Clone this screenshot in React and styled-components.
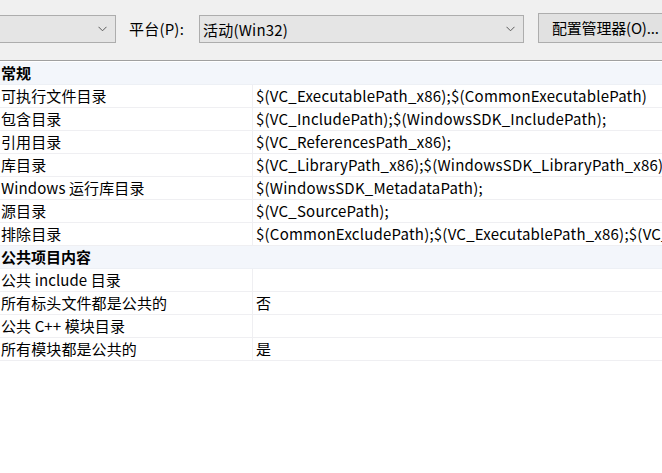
import React from "react";
import styled, { createGlobalStyle } from "styled-components";

const Global = createGlobalStyle`
  html, body { margin: 0; padding: 0; background: #ffffff; }
  body {
    width: 662px; height: 473px; overflow: hidden;
    font-family: "Segoe UI", "Noto Sans", "Noto Sans CJK SC", sans-serif;
    font-size: 15px; color: #000;
  }
`;

const Page = styled.div`
  width: 662px;
  height: 473px;
  overflow: hidden;
  background: #fff;
  display: flex;
  flex-direction: column;
`;

const Toolbar = styled.div`
  height: 61px;
  box-sizing: border-box;
  flex: none;
  background: #f0f0f0;
  border-bottom: 1px solid #a0a0a0;
  display: flex;
  align-items: flex-start;
  padding-top: 13px;
  overflow: hidden;
  white-space: nowrap;
`;

const Combo = styled.div`
  box-sizing: border-box;
  flex: none;
  height: 28px;
  margin-top: 2px;
  width: ${(p) => p.$width}px;
  margin-left: ${(p) => p.$ml || 0}px;
  background: #e5e5e5;
  border: 1px solid #adadad;
  display: flex;
  align-items: center;
  justify-content: space-between;
  padding: 0 8px 0 3px;
  font-family: "Noto Sans CJK SC", "Noto Sans", sans-serif;
  font-size: 15px;
  letter-spacing: 0.2px;
  color: #000;
`;

const Label = styled.span`
  flex: none;
  margin: 2px 15px 0 13px;
  height: 28px;
  line-height: 28px;
  font-family: "Noto Sans CJK SC", "Noto Sans", sans-serif;
  font-size: 15px;
  letter-spacing: 0.2px;
  color: #000;
`;

const Button = styled.div`
  flex: none;
  box-sizing: border-box;
  margin-left: 14px;
  width: 150px;
  height: 30px;
  background: #e1e1e1;
  border: 1px solid #adadad;
  padding-left: 13px;
  line-height: 28px;
  font-family: "Noto Sans CJK SC", "Noto Sans", sans-serif;
  font-size: 15px;
  letter-spacing: -0.2px;
  color: #000;
`;

const Grid = styled.div`
  padding-top: 1px;
  font-family: "Noto Sans CJK SC", "Noto Sans", sans-serif;
  font-size: 15px;
`;

const Header = styled.div`
  height: 23px;
  box-sizing: border-box;
  background: #f3f6fb;
  border-bottom: 1px solid #edf0f5;
  padding-left: 1px;
  font-weight: 700;
  line-height: 22px;
  color: #000;
  white-space: nowrap;
`;

const Row = styled.div`
  display: grid;
  grid-template-columns: 253px 1fr;
  height: 23px;
  box-sizing: border-box;
  border-bottom: 1px solid #efeff2;
  background: #fff;
  white-space: nowrap;
  overflow: hidden;
`;

const NameCell = styled.div`
  border-right: 1px solid #efeff2;
  padding-left: 1px;
  line-height: 22px;
  overflow: hidden;
  letter-spacing: 0.1px;
  color: #000;
`;

const ValueCell = styled.div`
  padding-left: 3px;
  line-height: 22px;
  overflow: hidden;
  letter-spacing: 0.22px;
  color: #000;
`;

const Chevron = () => (
  <svg width="9" height="6" viewBox="0 0 9 6" style={{ flex: "none" }}>
    <path d="M0.5 0.8 L4.5 4.8 L8.5 0.8" fill="none" stroke="#5a5a5a" strokeWidth="1" />
  </svg>
);

const sections = [
  {
    title: "常规",
    rows: [
      ["可执行文件目录", "$(VC_ExecutablePath_x86);$(CommonExecutablePath)"],
      ["包含目录", "$(VC_IncludePath);$(WindowsSDK_IncludePath);"],
      ["引用目录", "$(VC_ReferencesPath_x86);"],
      ["库目录", "$(VC_LibraryPath_x86);$(WindowsSDK_LibraryPath_x86)"],
      ["Windows 运行库目录", "$(WindowsSDK_MetadataPath);"],
      ["源目录", "$(VC_SourcePath);"],
      ["排除目录", "$(CommonExcludePath);$(VC_ExecutablePath_x86);$(VC_LibraryPath_x86)"],
    ],
  },
  {
    title: "公共项目内容",
    rows: [
      ["公共 include 目录", ""],
      ["所有标头文件都是公共的", "否"],
      ["公共 C++ 模块目录", ""],
      ["所有模块都是公共的", "是"],
    ],
  },
];

export default function App() {
  return (
    <Page>
      <Global />
      <Toolbar>
        <Combo $width={126} $ml={-10}>
          <span />
          <Chevron />
        </Combo>
        <Label>平台(P):</Label>
        <Combo $width={325}>
          <span>活动(Win32)</span>
          <Chevron />
        </Combo>
        <Button>配置管理器(O)...</Button>
      </Toolbar>
      <Grid>
        {sections.map((s) => (
          <React.Fragment key={s.title}>
            <Header>{s.title}</Header>
            {s.rows.map(([n, v]) => (
              <Row key={n}>
                <NameCell>{n}</NameCell>
                <ValueCell>{v}</ValueCell>
              </Row>
            ))}
          </React.Fragment>
        ))}
      </Grid>
    </Page>
  );
}
